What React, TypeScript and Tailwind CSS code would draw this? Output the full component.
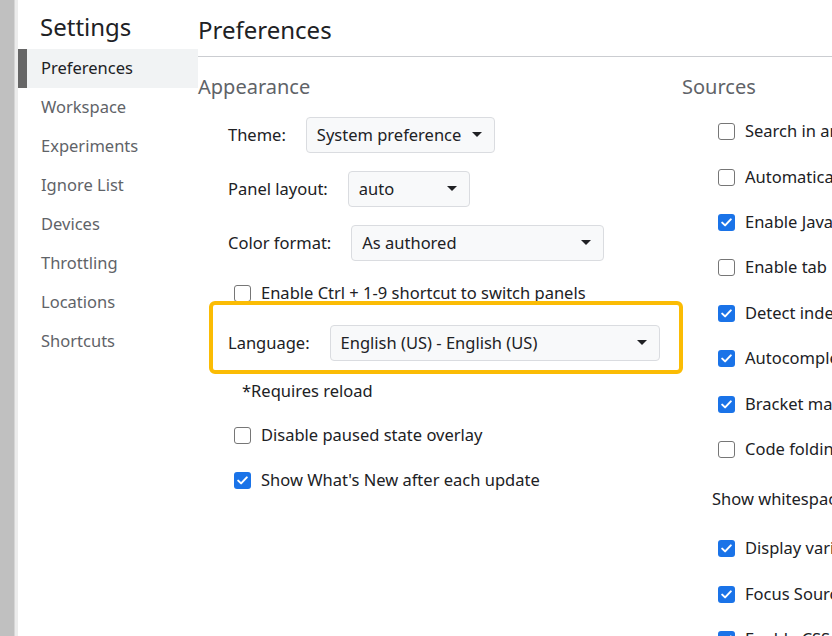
import React from 'react';

const font = { fontFamily: '"Noto Sans", "Open Sans", sans-serif' };

const navItems = ['Preferences', 'Workspace', 'Experiments', 'Ignore List', 'Devices', 'Throttling', 'Locations', 'Shortcuts'];

const Caret: React.FC = () => (
    <svg width="10" height="6" viewBox="0 0 10 6" className="shrink-0">
        <path d="M0 0 L10 0 L5 5 Z" fill="#202124" />
    </svg>
);

const Select: React.FC<{ value: string; width: string }> = ({ value, width }) => (
    <div className={`flex items-center justify-between h-[36px] rounded-[4px] border border-[#dadce0] bg-[#f8f9fa] pl-[10px] pr-[12px] ${width}`}>
        <span className="text-[#202124]">{value}</span>
        <Caret />
    </div>
);

const Checkbox: React.FC<{ checked?: boolean }> = ({ checked }) =>
    checked ? (
        <div className="w-[17px] h-[17px] rounded-[3px] bg-[#1a73e8] flex items-center justify-center shrink-0">
            <svg width="11" height="9" viewBox="0 0 11 9">
                <path d="M1.2 4.6 L4.1 7.4 L9.8 1.4" stroke="white" strokeWidth="2" fill="none" strokeLinecap="round" strokeLinejoin="round" />
            </svg>
        </div>
    ) : (
        <div className="w-[17px] h-[17px] rounded-[3px] border-[1.5px] border-[#767676] bg-white shrink-0" />
    );

const CheckRow: React.FC<{ checked?: boolean; label: string; className?: string }> = ({ checked, label, className }) => (
    <div className={`flex items-center gap-[10px] whitespace-nowrap ${className ?? ''}`}>
        <Checkbox checked={checked} />
        <span className="text-[#202124]">{label}</span>
    </div>
);

export default function App() {
    const sources: [boolean, string][] = [
        [false, 'Search in anonymous and content scripts'],
        [false, 'Automatically reveal files in sidebar'],
        [true, 'Enable JavaScript source maps'],
        [false, 'Enable tab moves focus'],
        [true, 'Detect indentation'],
        [true, 'Autocompletion'],
        [true, 'Bracket matching'],
        [false, 'Code folding'],
    ];

    return (
        <div className="flex w-[832px] h-[636px] overflow-hidden bg-white text-[16.5px]" style={font}>
            {/* window edge */}
            <div className="w-[14px] bg-[#c0c0c0] shrink-0" />
            <div className="w-[1px] bg-[#d6d6d6] shrink-0" />
            <div className="w-[3px] bg-[#ececec] shrink-0" />

            {/* Sidebar */}
            <div className="w-[180px] shrink-0">
                <div className="h-[49px] pl-[22px] pt-[9px] text-[24px] leading-[36px] text-[#202124]">Settings</div>
                {navItems.map((item, i) => (
                    <div
                        key={item}
                        className={`flex items-center h-[39px] ${i === 0 ? 'bg-[#f1f3f4] border-l-[9px] border-[#666666] pl-[14px] text-[#202124]' : 'pl-[23px] text-[#5f6368]'}`}
                    >
                        {item}
                    </div>
                ))}
            </div>

            {/* Main */}
            <div className="flex-1 min-w-0">
                <div className="h-[57px] border-b border-[#cbcdd1] pt-[12px] text-[24px] leading-[36px] text-[#202124] whitespace-nowrap">Preferences</div>
                <div className="flex">
                    {/* Appearance column */}
                    <div className="w-[484px] shrink-0">
                        <div className="mt-[16px] h-[28px] text-[20px] leading-[28px] text-[#5f6368]">Appearance</div>
                        <div className="pl-[30px]">
                            <div className="mt-[16px] flex items-center gap-[20px]">
                                <span className="text-[#202124]">Theme:</span>
                                <Select value="System preference" width="w-[189px]" />
                            </div>
                            <div className="mt-[18px] flex items-center gap-[20px]">
                                <span className="text-[#202124]">Panel layout:</span>
                                <Select value="auto" width="w-[122px]" />
                            </div>
                            <div className="mt-[18px] flex items-center gap-[20px]">
                                <span className="text-[#202124]">Color format:</span>
                                <Select value="As authored" width="w-[253px]" />
                            </div>
                            <CheckRow label="Enable Ctrl + 1-9 shortcut to switch panels" className="ml-[6px] mt-[20px] h-[24px]" />
                        </div>
                        <div className="-mt-[4px] ml-[11px] w-[474px] h-[73px] border-[4px] border-[#fbbc04] rounded-[6px] flex items-start gap-[20px] pl-[15px] pt-[20px] relative">
                            <span className="h-[36px] flex items-center text-[#202124]">Language:</span>
                            <Select value="English (US) - English (US)" width="w-[330px]" />
                        </div>
                        <div className="pl-[44px] h-[34px] flex items-center text-[#202124]">*Requires reload</div>
                        <div className="pl-[36px]">
                            <CheckRow label="Disable paused state overlay" className="mt-[7px] h-[40px]" />
                            <CheckRow checked label="Show What's New after each update" className="mt-[5px] h-[40px]" />
                        </div>
                    </div>

                    {/* Sources column */}
                    <div className="flex-1 min-w-0">
                        <div className="mt-[16px] h-[28px] text-[20px] leading-[28px] text-[#5f6368] whitespace-nowrap">Sources</div>
                        <div className="pl-[36px] mt-[8px]">
                            {sources.map(([c, l]) => (
                                <CheckRow key={l} checked={c} label={l} className="h-[45.4px]" />
                            ))}
                        </div>
                        <div className="pl-[30px] h-[54px] flex items-center text-[#202124] whitespace-nowrap">Show whitespace characters:</div>
                        <div className="pl-[36px]">
                            <CheckRow checked label="Display variable values inline while debugging" className="h-[45.4px]" />
                            <CheckRow checked label="Focus Sources panel when triggering a breakpoint" className="h-[45.4px]" />
                            <CheckRow checked label="Enable CSS source maps" className="h-[45.4px]" />
                        </div>
                    </div>
                </div>
            </div>
        </div>
    );
}
